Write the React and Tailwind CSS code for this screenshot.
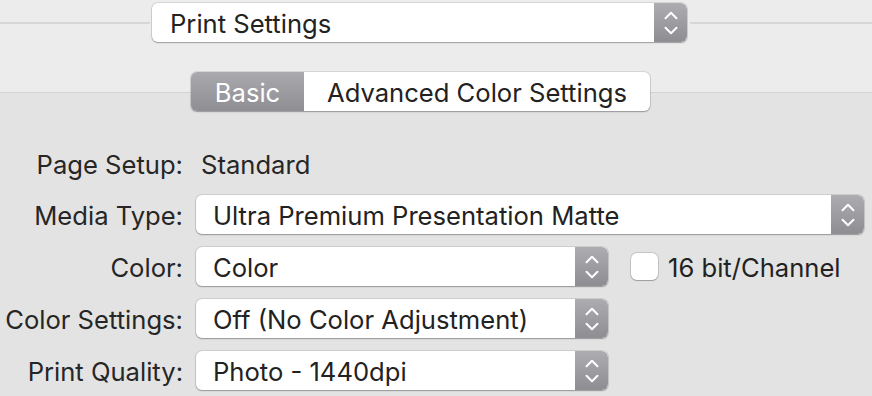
import React from "react";

function Stepper() {
  return (
    <div className="flex w-[33px] shrink-0 flex-col items-center justify-center gap-[6px] rounded-r-[6px] bg-gradient-to-b from-[#acacb1] to-[#8d8d92]">
      <svg width="14" height="9" viewBox="0 0 14 9" fill="none">
        <path d="M1.5 7.2 L7 1.8 L12.5 7.2" stroke="white" strokeWidth="2" strokeLinecap="round" strokeLinejoin="round" />
      </svg>
      <svg width="14" height="9" viewBox="0 0 14 9" fill="none">
        <path d="M1.5 1.8 L7 7.2 L12.5 1.8" stroke="white" strokeWidth="2" strokeLinecap="round" strokeLinejoin="round" />
      </svg>
    </div>
  );
}

function Popup({ value, width, pad = "pl-[17px]" }) {
  return (
    <div
      className={`flex h-[39px] shrink-0 overflow-hidden rounded-[6px] bg-white shadow-[0_0_0_1px_rgba(0,0,0,0.09),0_1px_1.5px_rgba(0,0,0,0.28)] ${width}`}
    >
      <div className={`flex flex-1 items-center whitespace-nowrap ${pad} pt-[3px] text-[#222]`}>{value}</div>
      <Stepper />
    </div>
  );
}

function Label({ children }) {
  return (
    <div className="flex w-[184px] shrink-0 justify-end whitespace-nowrap pr-[1px] pt-[3px] text-[#262626]">{children}</div>
  );
}

export default function App() {
  return (
    <div
      className="h-[396px] w-[872px] overflow-hidden bg-[#e3e3e3] text-[25.6px] leading-none antialiased"
      style={{ fontFamily: "Inter, 'Liberation Sans', sans-serif" }}
    >
      {/* top area */}
      <div className="h-[93px] border-b border-[#d3d3d3] bg-[#ececec] pt-[3px]">
        <div className="flex items-center">
          <div className="h-[2px] w-[150px] bg-[#d6d6d6]" />
          <div className="ml-[2px]">
            <Popup value="Print Settings" width="w-[535px]" pad="pl-[18px]" />
          </div>
          <div className="ml-[3px] h-[2px] flex-1 bg-[#d6d6d6]" />
        </div>
      </div>

      {/* segmented control straddling the border */}
      <div className="relative z-10 -mt-[21px] ml-[191px] flex h-[39px] w-[459px] overflow-hidden rounded-[6px] bg-white shadow-[0_0_0_1px_rgba(0,0,0,0.09),0_1px_1.5px_rgba(0,0,0,0.28)]">
        <div className="flex w-[113px] items-center justify-center bg-gradient-to-b from-[#a9a9ae] to-[#8e8e93] pt-[3px] text-white">
          Basic
        </div>
        <div className="flex flex-1 items-center justify-center whitespace-nowrap pt-[3px] text-[#222]">
          Advanced Color Settings
        </div>
      </div>

      {/* form */}
      <div className="mt-[33px] flex flex-col gap-[13px]">
        <div className="flex h-[38px] items-center gap-[17px]">
          <Label>Page Setup:</Label>
          <div className="pt-[3px] text-[#262626]">Standard</div>
        </div>
        <div className="flex items-center gap-[12px]">
          <Label>Media Type:</Label>
          <Popup value="Ultra Premium Presentation Matte" width="w-[668px]" />
        </div>
        <div className="flex items-center gap-[12px]">
          <Label>Color:</Label>
          <Popup value="Color" width="w-[412px]" />
          <div className="ml-[11px] h-[27px] w-[27px] rounded-[6px] bg-white shadow-[0_0_0_1px_rgba(0,0,0,0.13),0_1px_1px_rgba(0,0,0,0.2)]" />
          <div className="ml-[-2px] whitespace-nowrap pt-[3px] text-[#222]">16 bit/Channel</div>
        </div>
        <div className="flex items-center gap-[12px]">
          <Label>Color Settings:</Label>
          <Popup value="Off (No Color Adjustment)" width="w-[412px]" />
        </div>
        <div className="flex items-center gap-[12px]">
          <Label>Print Quality:</Label>
          <Popup value="Photo - 1440dpi" width="w-[412px]" />
        </div>
      </div>
    </div>
  );
}
